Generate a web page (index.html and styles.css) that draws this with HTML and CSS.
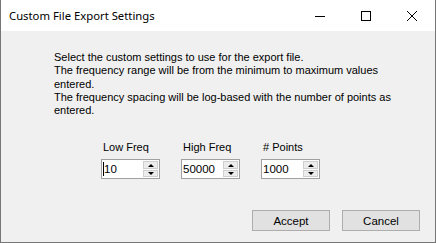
FILE: index.html
```html
<!DOCTYPE html>
<html lang="en">
<head>
    <meta charset="UTF-8">
    <title>Custom File Export Settings</title>
    <link rel="stylesheet" href="styles.css">
</head>
<body>
    <div class="window">
        <div class="title-bar">
            <div class="title">Custom File Export Settings</div>
            <div class="caption-buttons">
                <div class="caption-btn">
                    <svg width="10" height="10" viewBox="0 0 10 10"><path d="M0 5.5H10" stroke="#000" stroke-width="1"/></svg>
                </div>
                <div class="caption-btn">
                    <svg width="10" height="10" viewBox="0 0 10 10"><rect x="0.5" y="0.5" width="9" height="9" fill="none" stroke="#000" stroke-width="1"/></svg>
                </div>
                <div class="caption-btn">
                    <svg width="10" height="10" viewBox="0 0 10 10"><path d="M0 0L10 10M10 0L0 10" stroke="#000" stroke-width="1"/></svg>
                </div>
            </div>
        </div>

        <div class="dialog-body">
            <p class="info">
                Select the custom settings to use for the export file.<br>
                The frequency range will be from the minimum to maximum values<br>
                entered.<br>
                The frequency spacing will be log-based with the number of points as<br>
                entered.
            </p>

            <div class="fields">
                <div class="field">
                    <label>Low Freq</label>
                    <div class="spin-box">
                        <span class="spin-value"><span class="caret"></span>10</span>
                        <div class="spinner">
                            <div class="spin-up"></div>
                            <div class="spin-down"></div>
                        </div>
                    </div>
                </div>
                <div class="field">
                    <label>High Freq</label>
                    <div class="spin-box">
                        <span class="spin-value">50000</span>
                        <div class="spinner">
                            <div class="spin-up"></div>
                            <div class="spin-down"></div>
                        </div>
                    </div>
                </div>
                <div class="field">
                    <label># Points</label>
                    <div class="spin-box">
                        <span class="spin-value">1000</span>
                        <div class="spinner">
                            <div class="spin-up"></div>
                            <div class="spin-down"></div>
                        </div>
                    </div>
                </div>
            </div>

            <div class="actions">
                <button>Accept</button>
                <button>Cancel</button>
            </div>
        </div>
    </div>
</body>
</html>
```

FILE: styles.css
```css
body {
    margin: 0;
    background: #fff;
    font-family: 'Liberation Sans', Arial, sans-serif;
    font-size: 11px;
    color: #000;
}
.window {
    width: 436px;
    height: 243px;
    box-sizing: border-box;
    border: 1px solid #767676;
    border-top: none;
    display: flex;
    flex-direction: column;
    background: #f0f0f0;
}
.title-bar {
    height: 31px;
    background: #fff;
    display: flex;
    align-items: center;
}
.title {
    flex: 1;
    padding-left: 8px;
    font-family: 'Noto Sans', sans-serif;
    font-size: 11.3px;
    color: #000;
}
.caption-buttons {
    display: flex;
    height: 100%;
}
.caption-btn {
    width: 46px;
    display: flex;
    align-items: center;
    justify-content: center;
}
.dialog-body {
    flex: 1;
    padding: 20px 15px 0 53px;
}
.info {
    margin: 0;
    line-height: 13.3px;
}
.fields {
    display: flex;
    gap: 21px;
    margin-top: 24px;
    margin-left: 47px;
}
.field {
    display: flex;
    flex-direction: column;
    width: 59px;
}
.field label {
    line-height: 13px;
    padding-left: 2px;
    margin-bottom: 5px;
}
.spin-box {
    height: 20px;
    box-sizing: border-box;
    border: 1px solid #a0a0a0;
    background: #fff;
    display: flex;
    align-items: center;
}
.spin-value {
    flex: 1;
    padding-left: 1px;
    font-size: 11.5px;
    color: #000;
    display: flex;
    align-items: center;
}
.caret {
    width: 1px;
    height: 14px;
    background: #000;
}
.spinner {
    width: 15px;
    height: 16px;
    margin-right: 1px;
    display: flex;
    flex-direction: column;
    gap: 1px;
}
.spin-up,
.spin-down {
    flex: 1;
    box-sizing: border-box;
    border: 1px solid #cfcfcf;
    background: #ececec;
    display: flex;
    align-items: center;
    justify-content: center;
}
.spin-up::before {
    content: '';
    border-left: 3px solid transparent;
    border-right: 3px solid transparent;
    border-bottom: 3px solid #000;
}
.spin-down::before {
    content: '';
    border-left: 3px solid transparent;
    border-right: 3px solid transparent;
    border-top: 3px solid #000;
}
.actions {
    display: flex;
    justify-content: flex-end;
    gap: 12px;
    margin-top: 31px;
}
.actions button {
    width: 78px;
    height: 21px;
    border: 1px solid #adadad;
    background: #e1e1e1;
    font-family: 'Liberation Sans', Arial, sans-serif;
    font-size: 11.5px;
    color: #000;
    padding: 0;
}
```
